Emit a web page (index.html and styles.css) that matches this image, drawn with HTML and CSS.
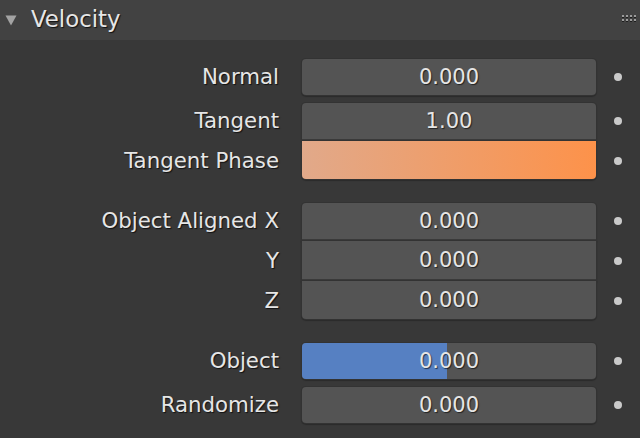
FILE: index.html
```html
<!DOCTYPE html>
<html>
<head>
<meta charset="utf-8">
<link rel="stylesheet" href="styles.css">
</head>
<body>
<div class="panel">
  <div class="header">
    <svg class="tri" width="12" height="11" viewBox="0 0 12 11"><path d="M0.5 0.5 L11.5 0.5 L6 10.5 Z" fill="#a3a3a3"/></svg>
    <span class="title">Velocity</span>
    <div class="grip">
      <i></i><i></i><i></i><i></i>
      <i></i><i></i><i></i><i></i>
    </div>
  </div>
  <div class="content">
    <div class="group">
      <div class="row"><div class="label">Normal</div><div class="field single">0.000</div><div class="dot"></div></div>
    </div>
    <div class="group gap4">
      <div class="row"><div class="label">Tangent</div><div class="field first">1.00</div><div class="dot"></div></div>
      <div class="row"><div class="label">Tangent Phase</div><div class="field last orange"></div><div class="dot"></div></div>
    </div>
    <div class="group gap20">
      <div class="row"><div class="label">Object Aligned X</div><div class="field first">0.000</div><div class="dot"></div></div>
      <div class="row"><div class="label">Y</div><div class="field mid">0.000</div><div class="dot"></div></div>
      <div class="row"><div class="label">Z</div><div class="field last">0.000</div><div class="dot"></div></div>
    </div>
    <div class="group gap20">
      <div class="row"><div class="label">Object</div><div class="field single slider"><div class="fill" style="width:49.3%"></div><span class="val">0.000</span></div><div class="dot"></div></div>
    </div>
    <div class="group gap4">
      <div class="row"><div class="label">Randomize</div><div class="field single">0.000</div><div class="dot"></div></div>
    </div>
  </div>
</div>
</body>
</html>
```

FILE: styles.css
```css
html, body {
  margin: 0;
  padding: 0;
  background: #383838;
}
body {
  width: 640px;
  height: 438px;
  overflow: hidden;
  font-family: "DejaVu Sans", sans-serif;
  color: #e6e6e6;
}
.panel {
  width: 640px;
}
.header {
  height: 40px;
  background: #424242;
  display: flex;
  align-items: center;
  position: relative;
}
.tri {
  margin-left: 5px;
  display: block;
}
.title {
  margin-left: 14px;
  font-size: 22.8px;
  line-height: 40px;
  margin-top: -2px;
  color: #e6e6e6;
  text-shadow: 1px 1px 1px rgba(0,0,0,0.75);
}
.grip {
  margin-left: auto;
  margin-right: 4px;
  margin-top: -4px;
  display: grid;
  grid-template-columns: repeat(4, 2px);
  grid-auto-rows: 2px;
  column-gap: 2px;
  row-gap: 2px;
}
.grip i {
  display: block;
  width: 2px;
  height: 2px;
  background: #9c9c9c;
  box-shadow: 0 1px 0 #1e1e1e;
}
.content {
  padding-top: 17px;
}
.gap4 { margin-top: 4px; }
.gap20 { margin-top: 20px; }
.row {
  display: grid;
  grid-template-columns: 302px 294px 44px;
  height: 40px;
  align-items: stretch;
}
.label {
  font-size: 21.3px;
  line-height: 40px;
  text-align: right;
  padding-right: 23px;
  color: #e6e6e6;
  text-shadow: 1px 1px 1px rgba(0,0,0,0.7);
  white-space: nowrap;
}
.field {
  background: #545454;
  font-size: 21px;
  text-align: center;
  color: #e6e6e6;
  text-shadow: 1px 1px 1px rgba(0,0,0,0.6);
  box-shadow: 0 0 0 1px #333333, 0 1px 1px 1px rgba(0,0,0,0.25);
  position: relative;
  display: flex;
  align-items: center;
  justify-content: center;
  box-sizing: border-box;
}
.field.single {
  margin: 2px 0;
  border-radius: 4px;
}
.field.first {
  margin-top: 2px;
  border-radius: 4px 4px 0 0;
  border-bottom: 2px solid #3a3a3a;
}
.field.mid {
  border-bottom: 2px solid #3a3a3a;
}
.field.last {
  margin-bottom: 2px;
  border-radius: 0 0 4px 4px;
}
.field.orange {
  background: linear-gradient(to right, #e1a98a, #fd924a);
}
.slider {
  overflow: hidden;
}
.fill {
  position: absolute;
  left: 0;
  top: 0;
  bottom: 0;
  background: #5680c2;
}
.val {
  position: relative;
}
.dot {
  width: 8px;
  height: 8px;
  border-radius: 50%;
  background: #cacaca;
  align-self: center;
  margin-left: 18px;
}
```
